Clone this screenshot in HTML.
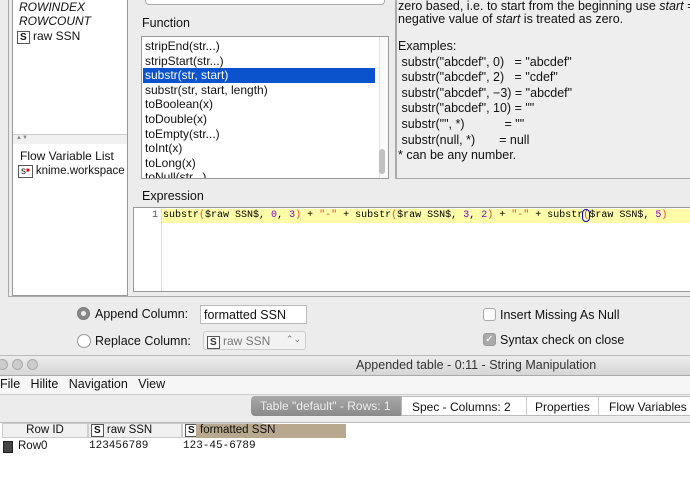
<!DOCTYPE html>
<html><head><style>
*{margin:0;padding:0;box-sizing:border-box}
body{width:690px;height:486px;overflow:hidden;background:#ececec;font-family:"Liberation Sans",sans-serif;font-size:12px;color:#111;position:relative}
.a{position:absolute;white-space:nowrap}
.mono{font-family:"Liberation Mono",monospace;font-size:10px}
.sbox{display:inline-block;border:1px solid #555;font-size:10px;line-height:11px;padding:0 2px;background:#fff;font-weight:bold}
</style></head><body>
<div class="a" style="left:8px;top:0;width:690px;height:297px;border-left:1px solid #aaa;border-bottom:1px solid #aaa"></div>
<div class="a" style="left:12px;top:0;width:116px;height:296px;background:#fff;border:1px solid #999;border-top:none"></div>
<div class="a" style="left:13px;top:134px;width:114px;height:10px;background:#f0f0f0;border-top:1px solid #ccc;font-size:6px;color:#888;padding-left:3px">▲▼</div>
<div class="a" style="left:19px;top:0;font-style:italic;font-size:12px">ROWINDEX</div>
<div class="a" style="left:19px;top:14px;font-style:italic;font-size:12px">ROWCOUNT</div>
<div class="a" style="left:17px;top:29px"><span class="sbox">S</span> raw SSN</div>
<div class="a" style="left:20px;top:149px;font-size:12px">Flow Variable List</div>
<div class="a" style="left:18px;top:165px;font-size:11.5px"><span class="sbox" style="font-weight:normal">s<span style="color:#d00;font-size:6px;vertical-align:top">■</span></span> knime.workspace</div>
<div class="a" style="left:142px;top:16px;font-size:12.5px">Function</div>
<div class="a" style="left:141px;top:36px;width:248px;height:143px;background:#fff;border:1px solid #999;overflow:hidden">
<div style="position:absolute;left:237px;top:0;width:10px;height:141px;background:#fafafa;border-left:1px solid #e4e4e4"></div>
<div style="position:absolute;left:237px;top:112px;width:6px;height:25px;background:#c0c0c0;border-radius:3px"></div>
<div style="position:absolute;left:1px;top:2px;line-height:14.6px;font-size:12px">
<div style="padding-left:2px">stripEnd(str...)</div>
<div style="padding-left:2px">stripStart(str...)</div>
<div style="padding-left:2px;background:#0a53cc;color:#fff;width:232px">substr(str, start)</div>
<div style="padding-left:2px">substr(str, start, length)</div>
<div style="padding-left:2px">toBoolean(x)</div>
<div style="padding-left:2px">toDouble(x)</div>
<div style="padding-left:2px">toEmpty(str...)</div>
<div style="padding-left:2px">toInt(x)</div>
<div style="padding-left:2px">toLong(x)</div>
<div style="padding-left:2px">toNull(str...)</div>
</div></div>
<div class="a" style="left:145px;top:0;width:240px;height:5px;border:1px solid #aaa;border-top:none;border-radius:0 0 4px 4px;background:#fff"></div>
<div class="a" style="left:395px;top:0;width:300px;height:179px;border-left:2px solid #aaa;border-bottom:1px solid #aaa;background:#eeeeee"></div>
<div class="a" style="left:398px;top:0;line-height:13px;font-size:12.5px">zero based, i.e. to start from the beginning use <i>start = 0. A</i><br>negative value of <i>start</i> is treated as zero.</div>
<div class="a" style="left:398px;top:39px;line-height:15.6px;font-size:12.5px">Examples:<br>&nbsp;substr("abcdef", 0)&nbsp;&nbsp;&nbsp;= "abcdef"<br>&nbsp;substr("abcdef", 2)&nbsp;&nbsp;&nbsp;= "cdef"<br>&nbsp;substr("abcdef", −3) = "abcdef"<br>&nbsp;substr("abcdef", 10) = ""<br>&nbsp;substr("", *)<span style="display:inline-block;width:40px"></span>= ""<br>&nbsp;substr(null, *)<span style="display:inline-block;width:24px"></span>= null<br>* can be any number.</div>
<div class="a" style="left:142px;top:189px;font-size:12.5px">Expression</div>
<div class="a" style="left:133px;top:207px;width:560px;height:85px;background:#fff;border:1px solid #999">
<div style="position:absolute;left:0;top:0;width:28px;height:83px;border-right:1px solid #ddd;background:#fff"></div>
<div style="position:absolute;left:28px;top:1px;width:530px;height:14px;background:#ffffaa"></div>
<div class="mono" style="position:absolute;left:0;top:1px;line-height:14px;color:#555;width:24px;text-align:right">1</div>
<div class="mono" style="position:absolute;left:29px;top:1px;line-height:14px;color:#000">substr<span style="color:#e44">(</span>$raw SSN$, <span style="color:#80c">0</span>, <span style="color:#80c">3</span><span style="color:#e44">)</span> + <span style="color:#e44">"-"</span> + substr<span style="color:#e44">(</span>$raw SSN$, <span style="color:#80c">3</span>, <span style="color:#80c">2</span><span style="color:#e44">)</span> + <span style="color:#e44">"-"</span> + substr<span style="color:#e44;outline:1px solid #00c;border-radius:3px">(</span>$raw SSN$, <span style="color:#80c">5</span><span style="color:#e44">)</span></div>
</div>
<div class="a" style="left:77px;top:307px;width:13px;height:13px;border-radius:50%;background:#888;border:1px solid #777"><div style="margin:3px;width:5px;height:5px;border-radius:50%;background:#eee"></div></div>
<div class="a" style="left:95px;top:307px;font-size:12.5px">Append Column:</div>
<div class="a" style="left:200px;top:305px;width:107px;height:19px;background:#fff;border:1px solid #bbb;padding:2px 3px;font-size:12.5px">formatted SSN</div>
<div class="a" style="left:77px;top:334px;width:14px;height:14px;border-radius:50%;background:#fff;border:1px solid #999"></div>
<div class="a" style="left:95px;top:334px;font-size:12.5px">Replace Column:</div>
<div class="a" style="left:203px;top:331px;width:103px;height:19px;background:#f2f2f2;border:1px solid #ccc;border-radius:3px;padding:2px 3px;color:#777"><span class="sbox" style="color:#333">S</span> raw SSN<span style="position:absolute;right:4px;top:2px;font-size:9px">⌃⌄</span></div>
<div class="a" style="left:483px;top:308px;width:13px;height:13px;border:1px solid #aaa;border-radius:3px;background:#fff"></div>
<div class="a" style="left:500px;top:308px;font-size:12.5px">Insert Missing As Null</div>
<div class="a" style="left:483px;top:333px;width:13px;height:13px;border:1px solid #999;border-radius:3px;background:#aaa;color:#fff;font-size:10px;line-height:12px;text-align:center">✓</div>
<div class="a" style="left:500px;top:333px;font-size:12.5px">Syntax check on close</div>
<div class="a" style="left:0;top:355px;width:690px;height:21px;background:linear-gradient(#ececec,#d6d6d6);border-top:1px solid #bbb;border-bottom:1px solid #aaa"></div>
<div class="a" style="left:-3px;top:359px;width:11px;height:11px;border-radius:50%;background:#ccc;border:1px solid #aaa"></div>
<div class="a" style="left:12px;top:359px;width:11px;height:11px;border-radius:50%;background:#ccc;border:1px solid #aaa"></div>
<div class="a" style="left:27px;top:359px;width:11px;height:11px;border-radius:50%;background:#ccc;border:1px solid #aaa"></div>
<div class="a" style="left:356px;top:358px;font-size:12.5px;color:#333">Appended table - 0:11 - String Manipulation</div>
<div class="a" style="left:0;top:376px;width:690px;height:19px;background:#f6f6f6;border-bottom:1px solid #ccc"></div>
<div class="a" style="left:0;top:377px;font-size:12.5px">File&nbsp;&nbsp;&nbsp;Hilite&nbsp;&nbsp;&nbsp;Navigation&nbsp;&nbsp;&nbsp;View</div>
<div class="a" style="left:0;top:395px;width:690px;height:28px;background:#ececec;border-bottom:1px solid #bbb"></div>
<div class="a" style="left:251px;top:396px;width:150px;height:20px;background:linear-gradient(#a8a8a8,#8a8a8a);border-radius:4px 0 0 4px;color:#eee;font-size:12px;padding:3px 0 0 9px">Table "default" - Rows: 1</div>
<div class="a" style="left:401px;top:396px;width:300px;height:20px;background:#fff;border:1px solid #bbb;font-size:12px;padding-top:3px">
<span style="position:absolute;left:10px">Spec - Columns: 2</span><span style="position:absolute;left:124px;top:0;height:18px;border-left:1px solid #ccc"></span>
<span style="position:absolute;left:133px">Properties</span><span style="position:absolute;left:196px;top:0;height:18px;border-left:1px solid #ccc"></span>
<span style="position:absolute;left:207px">Flow Variables</span></div>
<div class="a" style="left:0;top:423px;width:690px;height:63px;background:#fff"></div>
<div class="a" style="left:2px;top:423px;width:86px;height:15px;background:#f0f0f0;border:1px solid #ccc;text-align:center;font-size:11.5px">Row ID</div>
<div class="a" style="left:88px;top:423px;width:94px;height:15px;background:#f0f0f0;border:1px solid #ccc;padding-left:2px;font-size:11.5px;line-height:13px"><span class="sbox">S</span> raw SSN</div>
<div class="a" style="left:182px;top:423px;width:80px;height:15px;background:#fff;border:1px solid #ccc;padding-left:2px;font-size:11.5px;line-height:13px"><span class="sbox">S</span></div>
<div class="a" style="left:196px;top:424px;width:150px;height:14px;background:#b8a98e;padding-left:4px;font-size:11.5px;line-height:13px">formatted SSN</div>
<div class="a" style="left:3px;top:441px;width:10px;height:12px;background:#444;border:1px solid #222"></div>
<div class="a" style="left:18px;top:440px;font-size:11.5px">Row0</div>
<div class="a mono" style="left:89px;top:440px;font-size:11px">123456789</div>
<div class="a mono" style="left:183px;top:440px;font-size:11px">123-45-6789</div>
</body></html>
